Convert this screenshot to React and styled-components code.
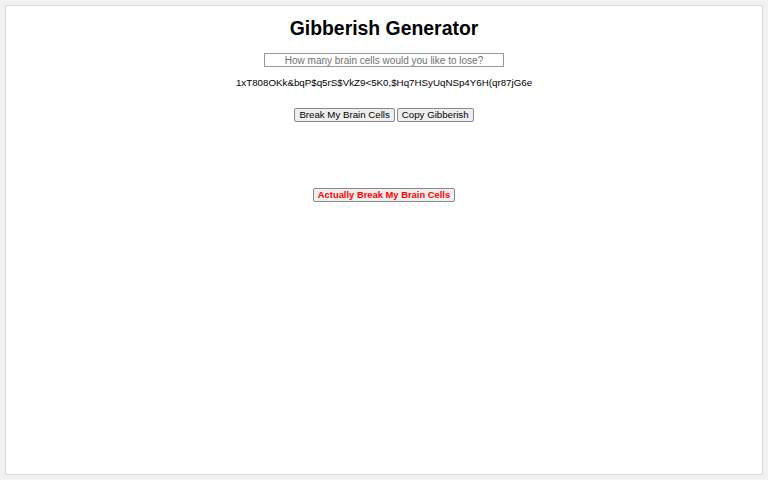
import React from "react";
import styled, { createGlobalStyle } from "styled-components";

const Global = createGlobalStyle`
  html, body { margin: 0; padding: 0; background: #f2f2f2; }
  body { font-family: "Liberation Sans", Arial, sans-serif; }
`;

const Page = styled.div`
  padding: 5px;
  box-sizing: border-box;
  height: 480px;
`;

const Card = styled.main`
  box-sizing: border-box;
  height: 470px;
  background: #fff;
  border: 1px solid #dcdcdc;
  display: flex;
  flex-direction: column;
  align-items: center;
  padding-top: 10px;
`;

const Title = styled.h1`
  margin: 0;
  font-size: 19.4px;
  line-height: 24px;
  font-weight: bold;
  color: #000;
`;

const Input = styled.input`
  margin-top: 13px;
  width: 240px;
  height: 14px;
  box-sizing: border-box;
  border: 1px solid #9a9a9a;
  padding: 0 4px;
  font-family: inherit;
  font-size: 10px;
  text-align: center;
  outline: none;
  &::placeholder { color: #6f6f6f; }
`;

const Output = styled.p`
  margin: 10px 0 0;
  font-size: 9.75px;
  line-height: 12px;
  color: #000;
`;

const Row = styled.div`
  margin-top: 19px;
  display: flex;
  gap: 2px;
`;

const Button = styled.button`
  height: 14px;
  box-sizing: border-box;
  padding: 0 4px;
  font-family: inherit;
  font-size: ${(p) => (p.$danger ? "9.4px" : "9.7px")};
  line-height: 12px;
  background: #efefef;
  border: 1px solid #8a8a8a;
  border-radius: 2px;
  color: ${(p) => (p.$danger ? "#f00" : "#000")};
  font-weight: ${(p) => (p.$danger ? "bold" : "normal")};
`;

const Danger = styled.div`
  margin-top: 62px;
`;

export default function App() {
  return (
    <>
      <Global />
      <Page>
        <Card>
          <Title>Gibberish Generator</Title>
          <Input placeholder="How many brain cells would you like to lose?" />
          <Output>1xT808OKk&amp;bqP$q5rS$VkZ9&lt;5K0,$Hq7HSyUqNSp4Y6H(qr87jG6e</Output>
          <Row>
            <Button>Break My Brain Cells</Button>
            <Button>Copy Gibberish</Button>
          </Row>
          <Danger>
            <Button $danger>Actually Break My Brain Cells</Button>
          </Danger>
        </Card>
      </Page>
    </>
  );
}
